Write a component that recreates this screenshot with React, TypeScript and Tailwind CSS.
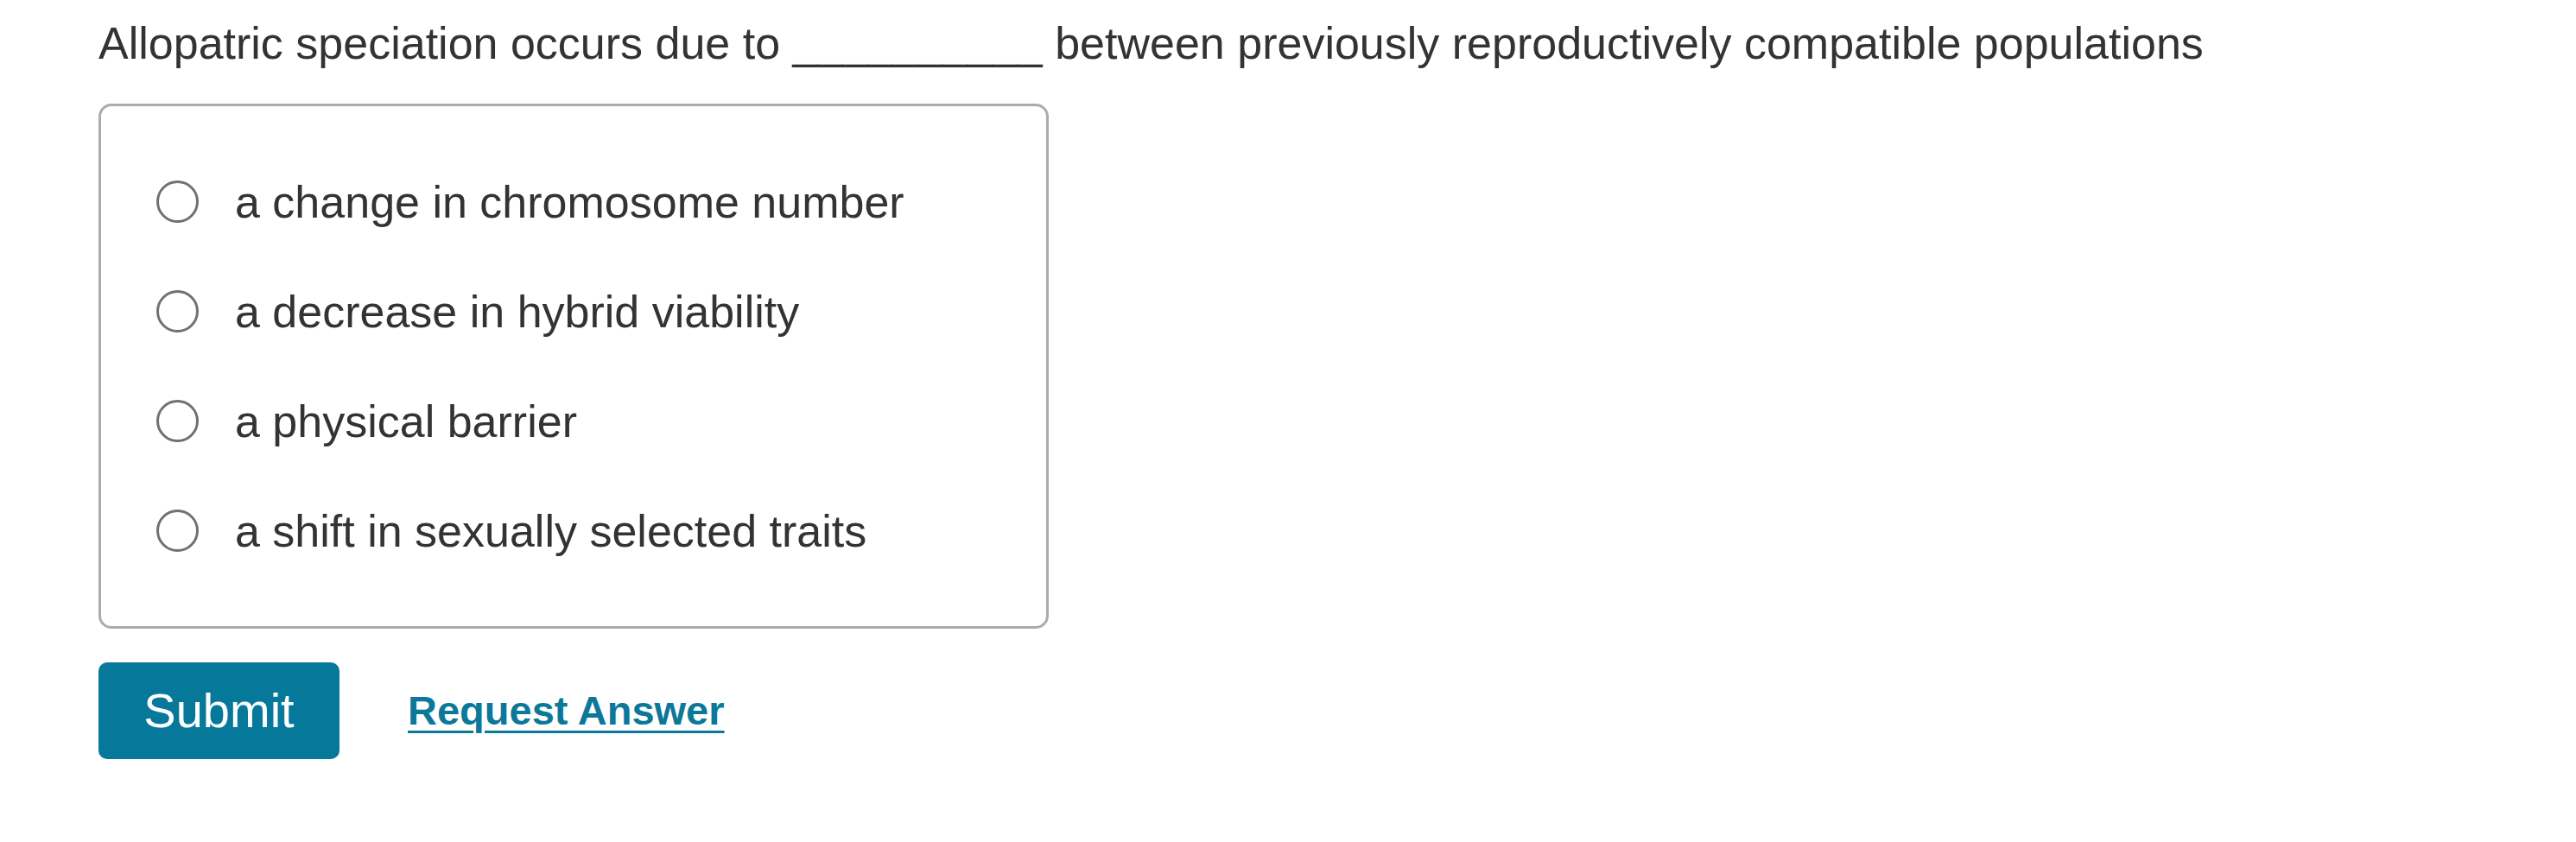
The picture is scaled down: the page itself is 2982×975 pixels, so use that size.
import * as React from 'react';

const options = [
  'a change in chromosome number',
  'a decrease in hybrid viability',
  'a physical barrier',
  'a shift in sexually selected traits',
];

export default function App() {
  const [selected, setSelected] = React.useState<number | null>(null);

  return (
    <div className="min-h-screen bg-white pl-[114px] pt-[20px] font-['Liberation_Sans',Arial,sans-serif] text-[#333333]">
      {/* Question */}
      <p className="whitespace-nowrap text-[52px] leading-[60px]">
        Allopatric speciation occurs due to __________ between previously reproductively compatible populations
      </p>

      {/* Choices */}
      <div className="mt-[40px] w-[1100px] rounded-[15px] border-[3px] border-[#ababab] py-[47px]">
        {options.map((opt, i) => (
          <label
            key={opt}
            className="flex h-[127px] cursor-pointer items-center pl-[64px]"
            onClick={() => setSelected(i)}
          >
            <span className="flex h-[49px] w-[49px] shrink-0 items-center justify-center rounded-full border-[3px] border-[#717171] bg-white">
              {selected === i && <span className="h-[25px] w-[25px] rounded-full bg-[#333333]" />}
            </span>
            <span className="ml-[42px] whitespace-nowrap text-[52px] leading-[60px]">{opt}</span>
          </label>
        ))}
      </div>

      {/* Actions */}
      <div className="mt-[39px] flex items-center">
        <button className="flex h-[112px] w-[279px] items-center justify-center rounded-[10px] bg-[#06799b] text-[56px] text-white">
          Submit
        </button>
        <a
          href="#"
          className="ml-[79px] text-[47px] font-bold text-[#0b789a] underline decoration-[3px] underline-offset-[7px]"
        >
          Request Answer
        </a>
      </div>
    </div>
  );
}
